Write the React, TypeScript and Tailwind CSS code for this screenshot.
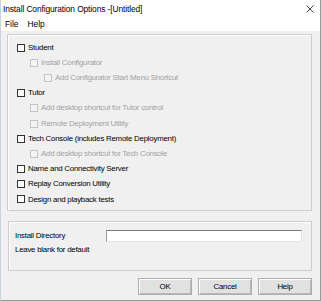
import React from "react";

type Item = { label: string; level: 0 | 1 | 2; disabled?: boolean };

const items: Item[] = [
  { label: "Student", level: 0 },
  { label: "Install Configurator", level: 1, disabled: true },
  { label: "Add Configurator Start Menu Shortcut", level: 2, disabled: true },
  { label: "Tutor", level: 0 },
  { label: "Add desktop shortcut for Tutor control", level: 1, disabled: true },
  { label: "Remote Deployment Utility", level: 1, disabled: true },
  { label: "Tech Console (includes Remote Deployment)", level: 0 },
  { label: "Add desktop shortcut for Tech Console", level: 1, disabled: true },
  { label: "Name and Connectivity Server", level: 0 },
  { label: "Replay Conversion Utility", level: 0 },
  { label: "Design and playback tests", level: 0 },
];

const indent = ["pl-[9px]", "pl-[22px]", "pl-[36px]"];

const CheckRow = ({ item }: { item: Item }) => (
  <div className={`flex items-center h-[15.2px] ${indent[item.level]}`}>
    <span
      className={
        item.disabled
          ? "w-[8px] h-[8px] border border-[#c4c4c4] bg-[#f4f4f4] shrink-0"
          : "w-[8px] h-[8px] border border-[#333333] bg-white shrink-0"
      }
    />
    <span
      className={`ml-[3px] whitespace-nowrap ${
        item.disabled ? "text-[#a3a3a3]" : "text-black"
      }`}
    >
      {item.label}
    </span>
  </div>
);

const Button = ({ label }: { label: string }) => (
  <button className="w-[54px] h-[17px] bg-[#e1e1e1] border border-[#adadad] shadow-[inset_1px_1px_0_#ffffff,inset_-1px_-1px_0_#b8b8b8] text-black">
    {label}
  </button>
);

export default function App() {
  return (
    <div
      className="w-[321px] h-[301px] bg-white flex flex-col text-[7.9px] tracking-[-0.25px] leading-none text-black"
      style={{ fontFamily: '"Liberation Sans", Arial, sans-serif' }}
    >
      <div className="flex-1 flex flex-col border-r border-b border-[#9a9a9a] border-l border-l-[#c9d3dd]">
        {/* title bar */}
        <div className="h-[17px] flex items-center pl-[2px] pr-[6px] pt-[1px] text-[8.4px] tracking-[-0.1px]">
          <span className="flex-1">Install Configuration Options -[Untitled]</span>
          <svg width="8" height="8" viewBox="0 0 8 8" className="mb-[1px]">
            <path d="M0.5 0.5 L7.5 7.5 M7.5 0.5 L0.5 7.5" stroke="#333" strokeWidth="0.9" />
          </svg>
        </div>
        {/* menu bar */}
        <div className="h-[14px] flex items-center gap-[9px] pl-[4px] text-[8.4px] tracking-normal">
          <span>File</span>
          <span>Help</span>
        </div>
        {/* client */}
        <div className="flex-1 bg-[#f0f0f0] flex flex-col pt-[3px] pl-[6px] pr-[8px]">
          <div className="border border-[#cdcdcd] shadow-[inset_1px_1px_0_#ffffff] pt-[5px] pb-[3px]">
            {items.map((it) => (
              <CheckRow key={it.label} item={it} />
            ))}
          </div>
          <div className="mt-[10px] ml-[1px] h-[50px] border border-[#cdcdcd] shadow-[inset_1px_1px_0_#ffffff] flex flex-col pl-[6px] pt-[8px]">
            <div className="flex items-center">
              <span className="w-[91px] whitespace-nowrap">Install Directory</span>
              <div className="w-[196px] h-[12px] bg-white border border-t-[#7a7a7a] border-l-[#9a9a9a] border-r-[#e3e3e3] border-b-[#e3e3e3]" />
            </div>
            <div className="mt-[4px] whitespace-nowrap">Leave blank for default</div>
          </div>
          <div className="flex justify-end gap-[6px] mt-[7px]">
            <Button label="OK" />
            <Button label="Cancel" />
            <Button label="Help" />
          </div>
        </div>
      </div>
    </div>
  );
}
